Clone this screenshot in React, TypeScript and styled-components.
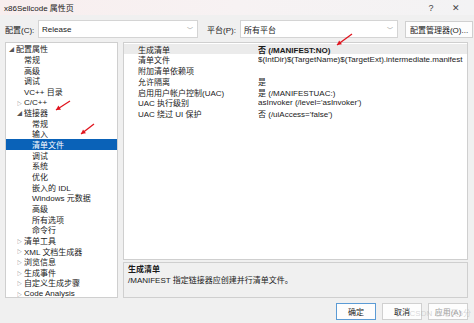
import React from "react";
import styled, { createGlobalStyle } from "styled-components";

const FONT = `"Liberation Sans", "Noto Sans CJK SC", sans-serif`;

const Global = createGlobalStyle`
  html, body { margin: 0; padding: 0; }
  body { background: #f0f0f0; font-family: ${FONT}; }
`;

const Dialog = styled.div`
  position: relative;
  width: 474px;
  height: 323px;
  background: #f0f0f0;
  display: flex;
  flex-direction: column;
  overflow: hidden;
  font-family: ${FONT};
  font-size: 8px;
  color: #1a1a1a;
`;

const TitleBar = styled.div`
  height: 15px;
  display: flex;
  align-items: center;
  padding: 0 8px 0 4px;
  background: linear-gradient(90deg, #f8eeee 0%, #f7f2f3 50%, #f3f3f4 100%);
  font-size: 8px;
`;

const Title = styled.div`
  flex: 1;
`;

const TitleBtn = styled.div<{ $w: number }>`
  width: ${(p) => p.$w}px;
  text-align: center;
  font-size: 9px;
  color: #444;
`;

const Toolbar = styled.div`
  margin-top: 5px;
  height: 18px;
  display: flex;
  align-items: center;
  padding: 0 6px 0 5px;
`;

const Label = styled.span<{ $w: number }>`
  width: ${(p) => p.$w}px;
  flex: none;
`;

const Combo = styled.div<{ $w: number }>`
  width: ${(p) => p.$w}px;
  height: 18px;
  box-sizing: border-box;
  background: #fff;
  border: 1px solid #d4d4d4;
  display: flex;
  align-items: center;
  padding: 0 4px 0 3px;
  flex: none;
`;

const ComboText = styled.span`
  flex: 1;
`;

const Chevron = styled.span`
  color: #999;
  font-size: 6px;
`;

const Spacer = styled.div<{ $w: number }>`
  width: ${(p) => p.$w}px;
  flex: none;
`;

const Button = styled.div<{ $w: number; $primary?: boolean; $disabled?: boolean }>`
  width: ${(p) => p.$w}px;
  height: 17px;
  box-sizing: border-box;
  display: flex;
  align-items: center;
  justify-content: center;
  background: #fdfdfd;
  border: 1px solid ${(p) => (p.$primary ? "#5b9bd5" : "#d0d0d0")};
  color: ${(p) => (p.$disabled ? "#a0a0a0" : "#1a1a1a")};
  font-size: 8px;
  white-space: nowrap;
  flex: none;
`;

const Main = styled.div`
  margin-top: 4px;
  height: 256px;
  display: flex;
  padding: 0 6px 0 5px;
  gap: 5px;
`;

const Tree = styled.div`
  width: 113px;
  box-sizing: border-box;
  background: #fff;
  border: 1px solid #cfcfcf;
  padding-top: 0.5px;
  flex: none;
`;

const TreeRow = styled.div<{ $level: number; $selected?: boolean }>`
  height: 10.65px;
  display: flex;
  align-items: center;
  padding-left: ${(p) => 3 + p.$level * 8}px;
  background: ${(p) => (p.$selected ? "#0a62b8" : "transparent")};
  color: ${(p) => (p.$selected ? "#fff" : "#1a1a1a")};
  white-space: nowrap;
`;

const Toggle = styled.span`
  width: 7px;
  flex: none;
  font-size: 5px;
  color: #555;
`;

const RightCol = styled.div`
  flex: 1;
  display: flex;
  flex-direction: column;
  gap: 2px;
`;

const Grid = styled.div`
  flex: 1;
  box-sizing: border-box;
  background: #fff;
  border: 1px solid #cfcfcf;
  padding-top: 0.5px;
`;

const PropRow = styled.div<{ $selected?: boolean }>`
  height: 10.8px;
  display: grid;
  grid-template-columns: 14px 120px 1fr;
  align-items: center;
  background: ${(p) => (p.$selected ? "#ebebeb" : "transparent")};
  white-space: nowrap;
`;

const PropName = styled.span`
  grid-column: 2;
`;

const PropValue = styled.span<{ $bold?: boolean }>`
  grid-column: 3;
  font-weight: ${(p) => (p.$bold ? 700 : 400)};
  overflow: hidden;
`;

const Desc = styled.div`
  height: 36px;
  box-sizing: border-box;
  border: 1px solid #cfcfcf;
  background: #f0f0f0;
  padding: 1px 4px;
  display: flex;
  flex-direction: column;
  justify-content: flex-start;
`;

const DescTitle = styled.div`
  font-weight: 700;
  line-height: 11px;
`;

const DescText = styled.div`
  line-height: 11px;
`;

const Footer = styled.div`
  flex: 1;
  display: flex;
  justify-content: flex-end;
  align-items: flex-start;
  padding: 5px 6px 0 0;
  gap: 6px;
`;

const Arrows = styled.svg`
  position: absolute;
  left: 0;
  top: 0;
  pointer-events: none;
`;

const Watermark = styled.div`
  position: absolute;
  right: 3px;
  bottom: 5px;
  font-size: 8px;
  color: rgba(160, 160, 160, 0.4);
  pointer-events: none;
`;

type Node = { label: string; level: number; toggle?: "open" | "closed"; selected?: boolean };

const treeItems: Node[] = [
  { label: "配置属性", level: 0, toggle: "open" },
  { label: "常规", level: 1 },
  { label: "高级", level: 1 },
  { label: "调试", level: 1 },
  { label: "VC++ 目录", level: 1 },
  { label: "C/C++", level: 1, toggle: "closed" },
  { label: "链接器", level: 1, toggle: "open" },
  { label: "常规", level: 2 },
  { label: "输入", level: 2 },
  { label: "清单文件", level: 2, selected: true },
  { label: "调试", level: 2 },
  { label: "系统", level: 2 },
  { label: "优化", level: 2 },
  { label: "嵌入的 IDL", level: 2 },
  { label: "Windows 元数据", level: 2 },
  { label: "高级", level: 2 },
  { label: "所有选项", level: 2 },
  { label: "命令行", level: 2 },
  { label: "清单工具", level: 1, toggle: "closed" },
  { label: "XML 文档生成器", level: 1, toggle: "closed" },
  { label: "浏览信息", level: 1, toggle: "closed" },
  { label: "生成事件", level: 1, toggle: "closed" },
  { label: "自定义生成步骤", level: 1, toggle: "closed" },
  { label: "Code Analysis", level: 1, toggle: "closed" },
];

const props: { name: string; value: string; bold?: boolean; selected?: boolean }[] = [
  { name: "生成清单", value: "否 (/MANIFEST:NO)", bold: true, selected: true },
  { name: "清单文件", value: "$(IntDir)$(TargetName)$(TargetExt).intermediate.manifest" },
  { name: "附加清单依赖项", value: "" },
  { name: "允许隔离", value: "是" },
  { name: "启用用户帐户控制(UAC)", value: "是 (/MANIFESTUAC:)" },
  { name: "UAC 执行级别", value: "asInvoker (/level='asInvoker')" },
  { name: "UAC 绕过 UI 保护", value: "否 (/uiAccess='false')" },
];

const Arrow = ({ x1, y1, x2, y2 }: { x1: number; y1: number; x2: number; y2: number }) => {
  const a = Math.atan2(y2 - y1, x2 - x1);
  const L = 5;
  const p1 = [x2 - L * Math.cos(a - 0.5), y2 - L * Math.sin(a - 0.5)];
  const p2 = [x2 - L * Math.cos(a + 0.5), y2 - L * Math.sin(a + 0.5)];
  return (
    <g>
      <line x1={x1} y1={y1} x2={x2} y2={y2} stroke="#e0141e" strokeWidth={1.3} />
      <polygon points={`${x2},${y2} ${p1[0]},${p1[1]} ${p2[0]},${p2[1]}`} fill="#e0141e" />
    </g>
  );
};

export default function App() {
  return (
    <>
      <Global />
      <Dialog>
        <TitleBar>
          <Title>x86Sellcode 属性页</Title>
          <TitleBtn $w={30}>?</TitleBtn>
          <TitleBtn $w={20}>✕</TitleBtn>
        </TitleBar>
        <Toolbar>
          <Label $w={33}>配置(C):</Label>
          <Combo $w={160}>
            <ComboText>Release</ComboText>
            <Chevron>﹀</Chevron>
          </Combo>
          <Spacer $w={9} />
          <Label $w={33}>平台(P):</Label>
          <Combo $w={158}>
            <ComboText>所有平台</ComboText>
            <Chevron>﹀</Chevron>
          </Combo>
          <Spacer $w={7} />
          <Button $w={68}>配置管理器(O)...</Button>
        </Toolbar>
        <Main>
          <Tree>
            {treeItems.map((n, i) => (
              <TreeRow key={i} $level={n.level} $selected={n.selected}>
                <Toggle>{n.toggle === "open" ? "◢" : n.toggle === "closed" ? "▷" : ""}</Toggle>
                {n.label}
              </TreeRow>
            ))}
          </Tree>
          <RightCol>
            <Grid>
              {props.map((p, i) => (
                <PropRow key={i} $selected={p.selected}>
                  <PropName>{p.name}</PropName>
                  <PropValue $bold={p.bold}>{p.value}</PropValue>
                </PropRow>
              ))}
            </Grid>
            <Desc>
              <DescTitle>生成清单</DescTitle>
              <DescText>/MANIFEST 指定链接器应创建并行清单文件。</DescText>
            </Desc>
          </RightCol>
        </Main>
        <Footer>
          <Button $w={40} $primary>确定</Button>
          <Button $w={40}>取消</Button>
          <Button $w={40} $disabled>应用(A)</Button>
        </Footer>
        <Watermark>CSDN @七天5分</Watermark>
        <Arrows width={474} height={323}>
          <Arrow x1={352} y1={34} x2={337} y2={45} />
          <Arrow x1={70} y1={101} x2={56} y2={110} />
          <Arrow x1={94} y1={124} x2={81} y2={134} />
        </Arrows>
      </Dialog>
    </>
  );
}
